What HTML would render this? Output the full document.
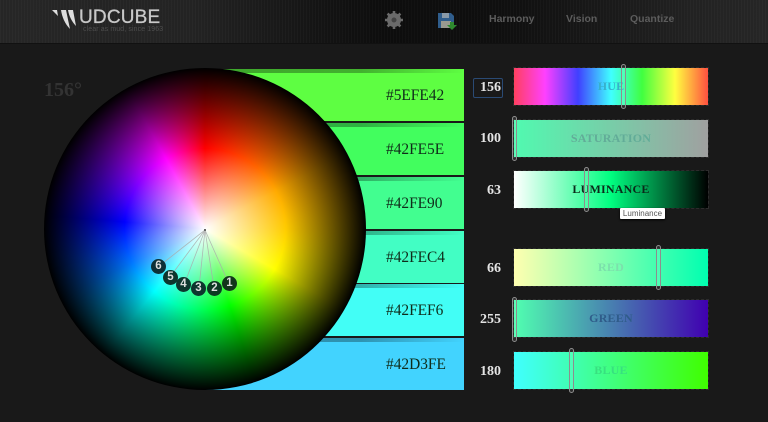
<!DOCTYPE html>
<html><head><meta charset="utf-8"><style>
html,body{margin:0;padding:0;background:#191919;}
#p{position:relative;width:768px;height:422px;overflow:hidden;background:#191919;font-family:"Liberation Serif",serif;filter:blur(.35px);}
#h{position:absolute;left:0;top:0;width:768px;height:43px;border-bottom:1px solid #111;background:repeating-linear-gradient(90deg,rgba(255,255,255,.018) 0 1px,rgba(0,0,0,.03) 1px 3px),linear-gradient(90deg,#272727 0,#242424 25%,#0d0d0d 50%,#0f0f0f 65%,#232323 90%,#272727 100%);}
.nav{position:absolute;top:13px;font:bold 10.5px "Liberation Sans",sans-serif;color:#5c5c5c;}
.row{position:absolute;left:205px;width:259px;height:52px;}
.row i{position:absolute;left:0;top:0;width:100%;height:4px;background:linear-gradient(90deg,rgba(0,0,0,.35),rgba(0,0,0,.3) 60%,rgba(0,0,0,0));}
.row b{position:absolute;left:181px;top:18px;font:normal 15.4px/18px "Liberation Serif",serif;color:#0f2c1a;white-space:nowrap;}
#w{position:absolute;left:44px;top:68px;width:322px;height:322px;border-radius:50%;background:radial-gradient(circle closest-side,#fff 0,rgba(255,255,255,.5) 25%,rgba(255,255,255,0) 50%,rgba(0,0,0,0) 50%,rgba(0,0,0,.5) 75%,#000 100%),conic-gradient(#f00 0,#f60 40deg,#fa0 62deg,#fc0 90deg,#ff0 120deg,#0f0 162deg,#0ff 219deg,#07f 245deg,#00f 275deg,#80f 305deg,#f0f 331deg,#f00 360deg);}
.sl{position:absolute;left:514px;width:194px;height:37px;outline:1px dashed #2c2c2c;}
.sl span{position:absolute;left:0;width:194px;top:10px;text-align:center;font:bold 12px/16px "Liberation Serif",serif;letter-spacing:.2px;}
.hd{position:absolute;width:3px;height:43px;border:1px solid #8e8e8e;border-radius:3px;background:rgba(255,255,255,.08);}
.n{position:absolute;font:bold 14px/16px "Liberation Serif",serif;color:#e4e4e4;text-align:right;width:30px;left:471px;}
.k{position:absolute;width:15px;height:15px;border-radius:50%;background:#0d362e;color:#ddd;font:bold 11.5px/15px "Liberation Sans",sans-serif;text-align:center;}
</style></head><body><div id="p">
<div id="h">
<svg style="position:absolute;left:50px;top:8px" width="34" height="24" viewBox="0 0 34 24"><path d="M2 2h5l1 6zM11 2h5l4 19C15 16 12 9 11 2zM18 2h5l3 16c-4-4-7-10-8-16z" fill="#ddd"/></svg>
<div style="position:absolute;left:79px;top:7px;font:19px/22px 'Liberation Sans',sans-serif;color:#c8c8c8;letter-spacing:.2px;-webkit-text-stroke:.3px #c8c8c8">UDCUBE</div>
<div style="position:absolute;left:83px;top:25px;font:7px/9px 'Liberation Sans',sans-serif;color:#4e4e4e;letter-spacing:.1px;white-space:nowrap">clear as mud, since 1963</div>
<svg style="position:absolute;left:385px;top:11px" width="18" height="18" viewBox="0 0 18 18"><circle cx="9" cy="9" r="5" fill="none" stroke="#6a6a6a" stroke-width="4"/><path d="M9 0v18M0 9h18M2.6 2.6l12.8 12.8M15.4 2.6L2.6 15.4" stroke="#6a6a6a" stroke-width="2.6"/><circle cx="9" cy="9" r="2.5" fill="#444"/></svg>
<svg style="position:absolute;left:437px;top:12px" width="20" height="18" viewBox="0 0 20 18"><path d="M1 1h13l3 3v12H1z" fill="#2f5d8c"/><rect x="5" y="1" width="7" height="5" fill="#8a9aa8"/><rect x="4" y="9" width="10" height="7" fill="#9a9a90"/><path d="M13 10h4v3h3l-5 5-5-5h3z" fill="#2f8a2f"/></svg>
<div class="nav" style="left:489px">Harmony</div><div class="nav" style="left:566px">Vision</div><div class="nav" style="left:630px">Quantize</div>
</div>
<div class="row" style="top:69px;background:#5efe42"><i></i><b>#5EFE42</b></div>
<div class="row" style="top:123px;background:#42fe5e"><i></i><b>#42FE5E</b></div>
<div class="row" style="top:177px;background:#42fe90"><i></i><b>#42FE90</b></div>
<div class="row" style="top:231px;background:#42fec4"><i></i><b>#42FEC4</b></div>
<div class="row" style="top:284px;background:#42fef6"><i></i><b>#42FEF6</b></div>
<div class="row" style="top:338px;background:#42d3fe"><i></i><b>#42D3FE</b></div>
<div style="position:absolute;left:44px;top:78px;font:bold 20px/24px 'Liberation Serif',serif;color:#333">156°</div>
<div id="w"></div>
<svg style="position:absolute;left:150px;top:225px" width="90" height="70"><g stroke="#aaa" stroke-width=".8" opacity=".8"><path d="M55 5L79 59M55 5L64 63M55 5L49 63M55 5L34 60M55 5L20 52M55 5L8 42"/></g><rect x="54" y="4" width="2" height="2" fill="#666"/></svg>
<div class="k" style="left:222px;top:276px;background:#12361a">1</div>
<div class="k" style="left:207px;top:281px;background:#0c3a22">2</div>
<div class="k" style="left:191px;top:281px">3</div>
<div class="k" style="left:176px;top:277px">4</div>
<div class="k" style="left:163px;top:270px">5</div>
<div class="k" style="left:151px;top:259px;background:#0d3038">6</div>
<div style="position:absolute;left:473px;top:78px;width:28px;height:18px;border:1px solid #2a4a74;border-radius:2px"></div>
<div class="n" style="top:80px">156</div>
<div class="n" style="top:131px">100</div>
<div class="n" style="top:183px">63</div>
<div class="n" style="top:261px">66</div>
<div class="n" style="top:312px">255</div>
<div class="n" style="top:364px">180</div>
<div class="sl" style="top:68px;background:linear-gradient(90deg,#ff4060 0,#ff40ff 16%,#4040ff 33%,#40ffff 50%,#40ff40 66%,#ffff40 83%,#ff5040 100%)"><span style="color:#38b0cc">HUE</span></div>
<div class="sl" style="top:120px;background:linear-gradient(90deg,#50fab0 0,#a0a0a0 100%)"><span style="color:#62ac98">SATURATION</span></div>
<div class="sl" style="top:171px;background:linear-gradient(90deg,#fff 0,#00fe80 50%,#000 100%)"><span style="color:#0a2a1a">LUMINANCE</span></div>
<div class="sl" style="top:249px;background:linear-gradient(90deg,#ffffb0 0,#00ffb0 100%)"><span style="color:#7ce0ac">RED</span></div>
<div class="sl" style="top:300px;background:linear-gradient(90deg,#50ffb0 0,#4000b0 100%)"><span style="color:#2f5c8a">GREEN</span></div>
<div class="sl" style="top:352px;background:linear-gradient(90deg,#40ffff 0,#40ff00 100%)"><span style="color:#38e080">BLUE</span></div>
<div class="hd" style="left:621px;top:64px"></div>
<div class="hd" style="left:512px;top:116px"></div>
<div class="hd" style="left:584px;top:167px"></div>
<div class="hd" style="left:656px;top:245px"></div>
<div class="hd" style="left:512px;top:297px"></div>
<div class="hd" style="left:569px;top:348px"></div>
<div style="position:absolute;left:620px;top:208px;width:45px;height:11px;background:#fff;border-radius:1px;box-shadow:0 1px 2px #000;font:8px/11px 'Liberation Sans',sans-serif;color:#555;text-align:center">Luminance</div>
</div></body></html>
